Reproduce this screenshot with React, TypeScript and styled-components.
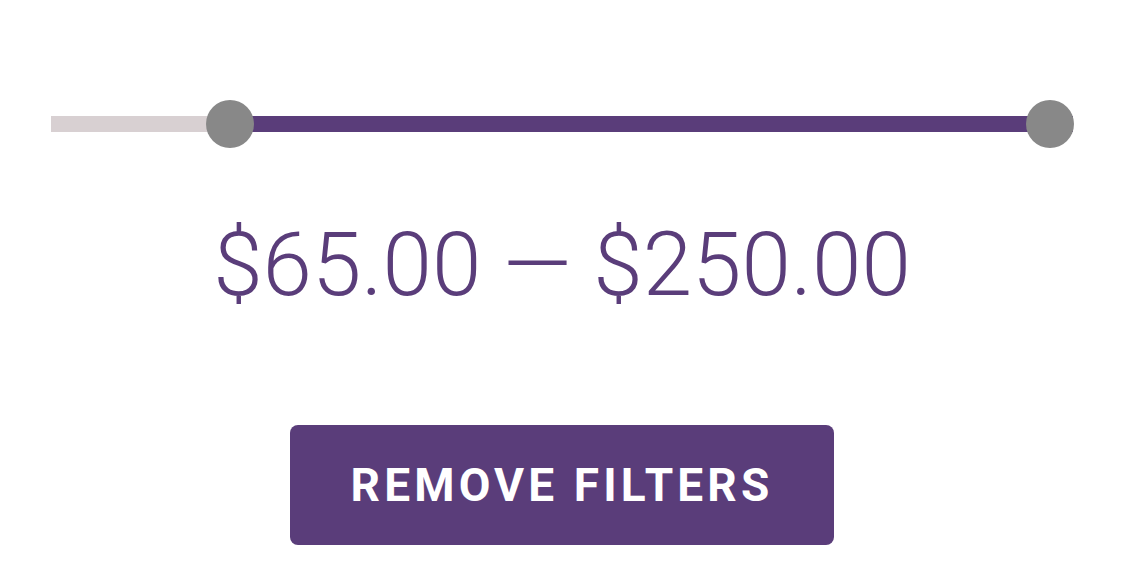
import styled, { createGlobalStyle } from "styled-components";

const GlobalStyle = createGlobalStyle`
  html, body {
    margin: 0;
    padding: 0;
    background: #ffffff;
    font-family: Roboto, "Liberation Sans", sans-serif;
  }
`;

const Panel = styled.div`
  width: 1022px;
  margin-left: 51px;
  padding-top: 100px;
  display: flex;
  flex-direction: column;
  align-items: center;
`;

const Slider = styled.div`
  position: relative;
  width: 100%;
  height: 48px;
  display: flex;
  align-items: center;
`;

const Track = styled.div`
  width: 100%;
  height: 16px;
  background: #d8d0d2;
  position: relative;
`;

const Range = styled.div`
  position: absolute;
  top: 0;
  bottom: 0;
  background: #5a3d7a;
`;

const Handle = styled.div`
  position: absolute;
  top: 0;
  width: 48px;
  height: 48px;
  margin-left: -24px;
  border-radius: 50%;
  background: #888888;
`;

const Price = styled.div`
  margin-top: 72px;
  font-family: Roboto, "Liberation Sans", sans-serif;
  font-weight: 300;
  font-size: 89px;
  line-height: 1;
  color: #5a3d7a;
  white-space: nowrap;
`;

const Button = styled.button`
  margin-top: 116px;
  width: 544px;
  height: 120px;
  border: none;
  border-radius: 8px;
  background: #5a3d7a;
  color: #ffffff;
  font-family: Roboto, "Liberation Sans", sans-serif;
  font-weight: 700;
  font-size: 46px;
  letter-spacing: 0.09em;
  text-transform: uppercase;
  cursor: pointer;
`;

const low = 65;
const high = 250;

export default function App() {
  // handle centres run from 179px to 999px of the track
  const pos = (v: number) => 179 + ((v - low) / (high - low)) * 820;
  return (
    <>
      <GlobalStyle />
      <Panel>
        <Slider>
          <Track>
            <Range style={{ left: pos(low), right: 0 }} />
          </Track>
          <Handle style={{ left: pos(low) }} />
          <Handle style={{ left: pos(high) }} />
        </Slider>
        <Price>
          ${low}.00 — ${high}.00
        </Price>
        <Button>Remove filters</Button>
      </Panel>
    </>
  );
}
